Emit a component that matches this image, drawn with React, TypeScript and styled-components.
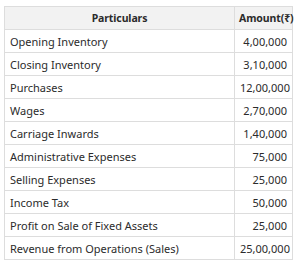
import React from 'react';
import styled, { createGlobalStyle } from 'styled-components';

const GlobalStyle = createGlobalStyle`
  body {
    margin: 0;
    background: #ffffff;
    font-family: "Noto Sans", "Open Sans", sans-serif;
  }
`;

const Wrapper = styled.div`
  padding: 6px 7px 0 4px;
`;

const Table = styled.table`
  width: 100%;
  border-collapse: collapse;
  table-layout: fixed;
  font-size: 11px;
  color: #2b2b2b;
`;

const AmountCol = styled.col`
  width: 58px;
`;

const HeadCell = styled.th<{ $align?: 'left' | 'center' | 'right' }>`
  background: #f2f2f2;
  border: 1px solid #dddddd;
  height: 22px;
  padding: 0 4px;
  font-size: 10.5px;
  font-weight: 700;
  letter-spacing: -0.1px;
  white-space: nowrap;
  text-align: ${(p) => p.$align || 'center'};
`;

const Cell = styled.td<{ $align?: 'left' | 'right' }>`
  border: 1px solid #dddddd;
  height: 22px;
  padding: 0 5px;
  text-align: ${(p) => p.$align || 'left'};
  white-space: nowrap;
`;

const rows: [string, string][] = [
  ['Opening Inventory', '4,00,000'],
  ['Closing Inventory', '3,10,000'],
  ['Purchases', '12,00,000'],
  ['Wages', '2,70,000'],
  ['Carriage Inwards', '1,40,000'],
  ['Administrative Expenses', '75,000'],
  ['Selling Expenses', '25,000'],
  ['Income Tax', '50,000'],
  ['Profit on Sale of Fixed Assets', '25,000'],
  ['Revenue from Operations (Sales)', '25,00,000'],
];

const App: React.FC = () => {
  return (
    <>
      <GlobalStyle />
      <Wrapper>
        <Table>
          <colgroup>
            <col />
            <AmountCol />
          </colgroup>
          <thead>
            <tr>
              <HeadCell>Particulars</HeadCell>
              <HeadCell $align="right">Amount(₹)</HeadCell>
            </tr>
          </thead>
          <tbody>
            {rows.map(([name, amount]) => (
              <tr key={name}>
                <Cell>{name}</Cell>
                <Cell $align="right">{amount}</Cell>
              </tr>
            ))}
          </tbody>
        </Table>
      </Wrapper>
    </>
  );
};

export default App;
